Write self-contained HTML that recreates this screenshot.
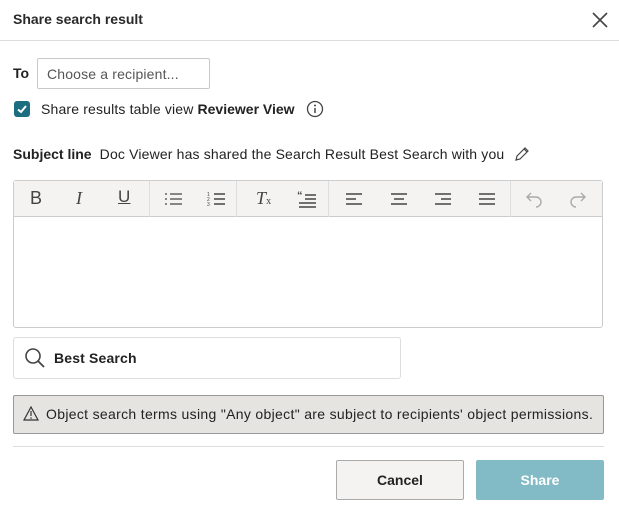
<!DOCTYPE html>
<html><head><style>
*{box-sizing:border-box;margin:0;padding:0}
body{width:619px;height:509px;background:#fff;font-family:"Liberation Sans",sans-serif;color:#222;position:relative;overflow:hidden;font-size:14px;letter-spacing:0.16px}
b{letter-spacing:0}
.a{position:absolute}
.tb svg{position:absolute;top:9px}
</style></head><body>
<div class="a" style="left:13px;top:11px;font-size:14px;font-weight:bold;color:#2a2a2a;letter-spacing:0">Share search result</div>
<svg class="a" style="left:592px;top:12px" width="16" height="16" viewBox="0 0 16 16"><path d="M1 1L15 15M15 1L1 15" stroke="#444" stroke-width="1.6"/></svg>
<div class="a" style="left:0;top:40px;width:619px;height:1px;background:#ddd"></div>
<div class="a" style="left:13px;top:65px;font-weight:bold;letter-spacing:0">To</div>
<div class="a" style="left:37px;top:58px;width:173px;height:31px;border:1px solid #c8c8c8;border-radius:2px;padding:7px 9px;color:#555">Choose a recipient...</div>
<div class="a" style="left:14px;top:101px;width:16px;height:16px;background:#1d6d80;border-radius:3px"><svg width="16" height="16"><path d="M4 8.5L7 11L12 5" stroke="#fff" stroke-width="2" fill="none"/></svg></div>
<div class="a" style="left:41px;top:101px">Share results table view <b>Reviewer View</b></div>
<svg class="a" style="left:306px;top:100px" width="18" height="18"><circle cx="9" cy="9" r="7.5" stroke="#444" stroke-width="1.3" fill="none"/><path d="M9 8v5" stroke="#444" stroke-width="1.5"/><circle cx="9" cy="5.5" r="1" fill="#444"/></svg>
<div class="a" style="left:13px;top:146px"><b>Subject line</b>&nbsp; Doc Viewer has shared the Search Result Best Search with you</div>
<svg class="a" style="left:514px;top:146px" width="16" height="16"><path d="M2 14l1-4 8-8 3 3-8 8z M10 3l3 3" stroke="#444" stroke-width="1.2" fill="none"/></svg>
<div class="a" style="left:13px;top:180px;width:590px;height:148px;border:1px solid #ccc;border-radius:3px"></div>
<div class="a tb" style="left:14px;top:181px;width:588px;height:36px;background:#f4f3f1;border-bottom:1px solid #ccc">
<div class="a" style="left:16px;top:7px;font-size:18px;color:#444">B</div>
<div class="a" style="left:62px;top:7px;font-size:18px;font-style:italic;font-family:'Liberation Serif';color:#444">I</div>
<div class="a" style="left:104px;top:6px;font-size:17px;color:#444;text-decoration:underline">U</div>
<div class="a" style="left:135px;top:0;width:1px;height:36px;background:#ddd"></div>
<svg style="left:150px" width="18" height="18"><path d="M6 4h12M6 9h12M6 14h12M1 4h2M1 9h2M1 14h2" stroke="#444" stroke-width="1.3"/></svg>
<svg style="left:193px" width="18" height="18"><path d="M7 4h11M7 9h11M7 14h11" stroke="#444" stroke-width="1.5"/><text x="0" y="6" font-size="5" fill="#444">1</text><text x="0" y="11" font-size="5" fill="#444">2</text><text x="0" y="16" font-size="5" fill="#444">3</text></svg>
<div class="a" style="left:222px;top:0;width:1px;height:36px;background:#ddd"></div>
<div class="a" style="left:242px;top:7px;font-size:18px;font-style:italic;font-family:'Liberation Serif';color:#444">T<span style="font-size:10px;font-style:normal">x</span></div>
<svg style="left:283px" width="20" height="18"><text x="0" y="9" font-size="11" font-weight="bold" fill="#444">“</text><path d="M8 5h11M8 9h11M2 13h17M2 17h17" stroke="#444" stroke-width="1.5"/></svg>
<div class="a" style="left:314px;top:0;width:1px;height:36px;background:#ddd"></div>
<svg style="left:331px" width="18" height="18"><path d="M1 4h16M1 9h10M1 14h16" stroke="#444" stroke-width="1.5"/></svg>
<svg style="left:376px" width="18" height="18"><path d="M1 4h16M4 9h10M1 14h16" stroke="#444" stroke-width="1.5"/></svg>
<svg style="left:420px" width="18" height="18"><path d="M1 4h16M7 9h10M1 14h16" stroke="#444" stroke-width="1.5"/></svg>
<svg style="left:464px" width="18" height="18"><path d="M1 4h16M1 9h16M1 14h16" stroke="#444" stroke-width="1.5"/></svg>
<div class="a" style="left:496px;top:0;width:1px;height:36px;background:#ddd"></div>
<svg style="left:512px" width="18" height="18"><path d="M5 3L1 7l4 4M1 7h9a5 5 0 0 1 0 10" stroke="#aaa" stroke-width="1.4" fill="none"/></svg>
<svg style="left:554px" width="18" height="18"><path d="M13 3l4 4-4 4M17 7H8a5 5 0 0 0 0 10" stroke="#aaa" stroke-width="1.4" fill="none"/></svg>
</div>
<div class="a" style="left:13px;top:337px;width:388px;height:42px;border:1px solid #ddd;border-radius:3px"></div>
<svg class="a" style="left:24px;top:347px" width="22" height="22"><circle cx="9" cy="9" r="7" stroke="#444" stroke-width="1.6" fill="none"/><path d="M14 14l6 6" stroke="#444" stroke-width="1.8"/></svg>
<div class="a" style="left:54px;top:350px;font-weight:bold">Best Search</div>
<div class="a" style="left:13px;top:395px;width:591px;height:39px;background:#e5e4e1;border:1px solid #999;border-radius:2px"></div>
<svg class="a" style="left:23px;top:406px" width="16" height="15"><path d="M8 1L15 14H1z" stroke="#333" stroke-width="1.2" fill="none"/><path d="M8 5v5" stroke="#333" stroke-width="1.2"/><circle cx="8" cy="12" r=".8" fill="#333"/></svg>
<div class="a" style="left:46px;top:406px;color:#222;letter-spacing:0.32px">Object search terms using "Any object" are subject to recipients' object permissions.</div>
<div class="a" style="left:13px;top:446px;width:591px;height:1px;background:#ddd"></div>
<div class="a" style="left:336px;top:460px;width:128px;height:40px;border:1px solid #aaa;border-radius:2px;background:#f4f3f1;text-align:center;line-height:38px;font-weight:bold;letter-spacing:0">Cancel</div>
<div class="a" style="left:476px;top:460px;width:128px;height:40px;background:#82bac6;border-radius:2px;text-align:center;line-height:40px;font-weight:bold;color:#fff;letter-spacing:0">Share</div>
</body></html>
